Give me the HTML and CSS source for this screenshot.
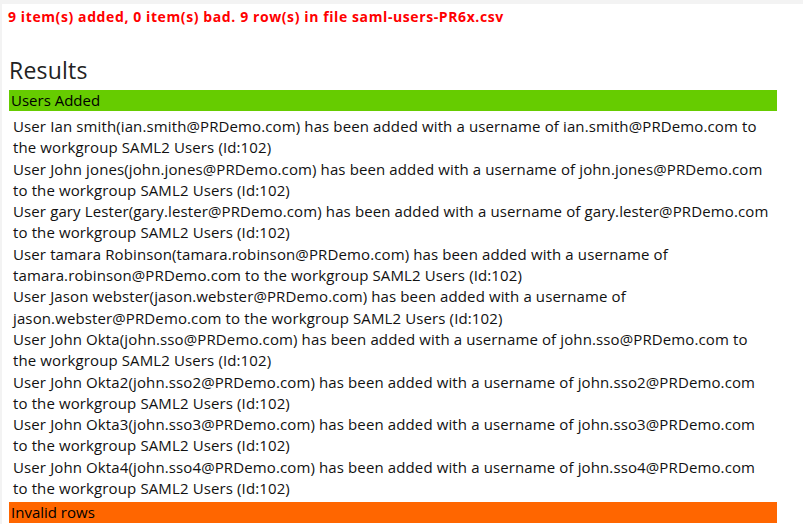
FILE: index.html
```html
<!DOCTYPE html>
<html>
<head>
<meta charset="utf-8">
<link rel="stylesheet" href="styles.css">
</head>
<body>
<div class="page">
  <div class="status">9 item(s) added, 0 item(s) bad. 9 row(s) in file saml-users-PR6x.csv</div>
  <h2 class="title">Results</h2>
  <div class="bar bar-green">Users Added</div>
  <div class="list">
    <div class="item">User Ian smith(ian.smith@PRDemo.com) has been added with a username of ian.smith@PRDemo.com to<br>the workgroup SAML2 Users (Id:102)</div>
    <div class="item">User John jones(john.jones@PRDemo.com) has been added with a username of john.jones@PRDemo.com<br>to the workgroup SAML2 Users (Id:102)</div>
    <div class="item">User gary Lester(gary.lester@PRDemo.com) has been added with a username of gary.lester@PRDemo.com<br>to the workgroup SAML2 Users (Id:102)</div>
    <div class="item">User tamara Robinson(tamara.robinson@PRDemo.com) has been added with a username of<br>tamara.robinson@PRDemo.com to the workgroup SAML2 Users (Id:102)</div>
    <div class="item">User Jason webster(jason.webster@PRDemo.com) has been added with a username of<br>jason.webster@PRDemo.com to the workgroup SAML2 Users (Id:102)</div>
    <div class="item">User John Okta(john.sso@PRDemo.com) has been added with a username of john.sso@PRDemo.com to<br>the workgroup SAML2 Users (Id:102)</div>
    <div class="item">User John Okta2(john.sso2@PRDemo.com) has been added with a username of john.sso2@PRDemo.com<br>to the workgroup SAML2 Users (Id:102)</div>
    <div class="item">User John Okta3(john.sso3@PRDemo.com) has been added with a username of john.sso3@PRDemo.com<br>to the workgroup SAML2 Users (Id:102)</div>
    <div class="item">User John Okta4(john.sso4@PRDemo.com) has been added with a username of john.sso4@PRDemo.com<br>to the workgroup SAML2 Users (Id:102)</div>
  </div>
  <div class="bar bar-orange">Invalid rows</div>
</div>
</body>
</html>
```

FILE: styles.css
```css
html, body {
  margin: 0;
  padding: 0;
  background: #f3f3f3;
  height: 100%;
  overflow: hidden;
}
.page {
  margin: 4px 0 0 2px;
  background: #ffffff;
  min-height: 520px;
  font-family: "Open Sans", "Noto Sans", sans-serif;
  color: #111;
}
.status {
  color: #ff0000;
  font-weight: bold;
  font-size: 14px;
  line-height: 20px;
  padding: 3px 0 0 6px;
  letter-spacing: 0.6px;
}
.title {
  margin: 27px 0 0 7px;
  font-size: 23px;
  font-weight: 400;
  line-height: 32px;
  color: #222;
  letter-spacing: 0.2px;
}
.bar {
  margin-left: 7px;
  width: 768px;
  height: 21px;
  line-height: 21px;
  font-size: 15px;
  padding-left: 2px;
  box-sizing: border-box;
  color: #000;
}
.bar-green {
  background: #66cc00;
  margin-top: 4px;
}
.bar-orange {
  background: #ff6600;
}
.list {
  padding: 5px 0 3px 11px;
}
.item {
  font-size: 15px;
  line-height: 21.3px;
  letter-spacing: 0.12px;
  white-space: nowrap;
}
```
